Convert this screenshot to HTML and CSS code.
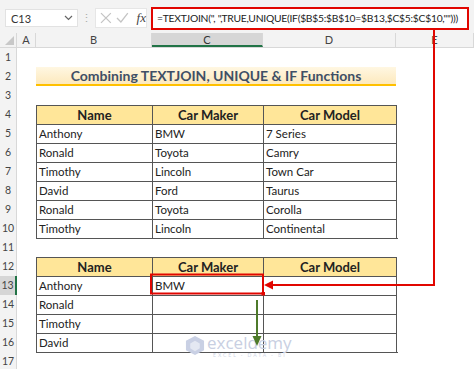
FILE: index.html
```html
<!DOCTYPE html>
<html lang="en">
<head>
    <meta charset="UTF-8">
    <title>TEXTJOIN UNIQUE IF</title>
    <link rel="stylesheet" href="styles.css">
</head>
<body>

<div class="app">
    <div class="formula-bar">
        <div class="name-box">
            <span>C13</span>
            <svg class="chevron" width="9" height="6" viewBox="0 0 9 6"><path d="M1 1 L4.5 4.5 L8 1" fill="none" stroke="#666" stroke-width="1.2"/></svg>
        </div>
        <div class="grip">⋮</div>
        <div class="fx-box">
            <svg width="12" height="12" viewBox="0 0 12 12"><path d="M1 1 L11 11 M11 1 L1 11" stroke="#c4c4c4" stroke-width="1.3"/></svg>
            <svg width="13" height="12" viewBox="0 0 13 12"><path d="M1 6 L5 10 L12 1" fill="none" stroke="#c4c4c4" stroke-width="1.3"/></svg>
            <span class="fx">fx</span>
        </div>
        <div class="formula">=TEXTJOIN(", ",TRUE,UNIQUE(IF($B$5:$B$10=$B13,$C$5:$C$10,"")))</div>
    </div>

    <div class="col-heads">
        <div class="corner"><svg width="9" height="9" viewBox="0 0 9 9"><path d="M9 0 L9 9 L0 9 Z" fill="#c8c8c8"/></svg></div>
        <div class="col-head col-a">A</div>
        <div class="col-head col-b">B</div>
        <div class="col-head col-c active">C</div>
        <div class="col-head col-d">D</div>
        <div class="col-head col-e">E</div>
    </div>

    <div class="sheet">
        <div class="row-heads">
            <div class="row-head">1</div>
            <div class="row-head">2</div>
            <div class="row-head">3</div>
            <div class="row-head">4</div>
            <div class="row-head">5</div>
            <div class="row-head">6</div>
            <div class="row-head">7</div>
            <div class="row-head">8</div>
            <div class="row-head">9</div>
            <div class="row-head">10</div>
            <div class="row-head">11</div>
            <div class="row-head">12</div>
            <div class="row-head active">13</div>
            <div class="row-head">14</div>
            <div class="row-head">15</div>
            <div class="row-head">16</div>
            <div class="row-head">17</div>
        </div>

        <div class="cells">
            <div class="blank"></div>
            <div class="title">Combining TEXTJOIN, UNIQUE &amp; IF Functions</div>
            <div class="blank"></div>

            <div class="data-table">
                <div class="th">Name</div><div class="th">Car Maker</div><div class="th">Car Model</div>
                <div class="td">Anthony</div><div class="td">BMW</div><div class="td">7 Series</div>
                <div class="td">Ronald</div><div class="td">Toyota</div><div class="td">Camry</div>
                <div class="td">Timothy</div><div class="td">Lincoln</div><div class="td">Town Car</div>
                <div class="td">David</div><div class="td">Ford</div><div class="td">Taurus</div>
                <div class="td">Ronald</div><div class="td">Toyota</div><div class="td">Corolla</div>
                <div class="td">Timothy</div><div class="td">Lincoln</div><div class="td">Continental</div>
            </div>

            <div class="blank short"></div>

            <div class="data-table">
                <div class="th">Name</div><div class="th">Car Maker</div><div class="th">Car Model</div>
                <div class="td">Anthony</div><div class="td">BMW</div><div class="td"></div>
                <div class="td">Ronald</div><div class="td"></div><div class="td"></div>
                <div class="td">Timothy</div><div class="td"></div><div class="td"></div>
                <div class="td">David</div><div class="td"></div><div class="td"></div>
            </div>
        </div>
    </div>

    <div class="watermark">
        <svg width="20" height="21" viewBox="0 0 21 22">
            <path d="M10.5 1 L20 6 L20 16 L10.5 21 L1 16 L1 6 Z" fill="#c9d0e4"/>
            <path d="M10.5 6 L15.5 9 L15.5 14 L10.5 17 L5.5 14 L5.5 9 Z" fill="#e4e8f2"/>
        </svg>
        <div class="wm-text">
            <span class="wm-name">exceldemy</span>
            <span class="wm-sub">EXCEL · DATA · BI</span>
        </div>
    </div>

    <svg class="overlay" width="474" height="369" viewBox="0 0 474 369">
        <rect x="151" y="274.5" width="112" height="19" fill="none" stroke="#e10600" stroke-width="2"/>
        <rect x="261.5" y="292" width="3.5" height="3.5" fill="#e10600"/>
        <path d="M434 28 L434 285 L270 285" fill="none" stroke="#e10600" stroke-width="2"/>
        <path d="M264 285 L273 280.5 L273 289.5 Z" fill="#e10600"/>
        <path d="M257 300 L257 338" fill="none" stroke="#4e7a2a" stroke-width="2"/>
        <path d="M257 346 L252.5 336 L261.5 336 Z" fill="#4e7a2a"/>
    </svg>
</div>

</body>
</html>
```

FILE: styles.css
```css
body {
    margin: 0;
    font-family: Lato, 'Open Sans', sans-serif;
    color: #222;
    background: #fff;
}

.app {
    position: relative;
    width: 474px;
    height: 369px;
    overflow: hidden;
    background: #fff;
}

/* Barra de formula */
.formula-bar {
    height: 33px;
    background: #f3f3f3;
    display: flex;
    align-items: center;
    padding-left: 5px;
    box-sizing: border-box;
    padding-top: 3px;
}

.name-box {
    width: 73px;
    height: 18px;
    background: #fff;
    border: 1px solid #e2e2e2;
    box-sizing: border-box;
    display: flex;
    align-items: center;
    justify-content: space-between;
    padding: 0 4px 0 5px;
    font-size: 11px;
    color: #333;
}

.grip {
    width: 17px;
    text-align: center;
    color: #aaa;
    font-size: 11px;
}

.fx-box {
    width: 52px;
    height: 20px;
    background: #fff;
    border: 1px solid #e6e6e6;
    box-sizing: border-box;
    display: flex;
    align-items: center;
    gap: 4px;
    padding-left: 4px;
}

.fx {
    font-family: 'Liberation Serif', serif;
    font-style: italic;
    font-size: 13px;
    color: #444;
    margin-left: 4px;
}

.formula {
    margin-left: 4px;
    width: 318px;
    height: 23px;
    background: #fff;
    border: 2px solid #e10600;
    box-sizing: border-box;
    font-size: 10.3px;
    letter-spacing: -0.25px;
    line-height: 19px;
    padding-left: 4px;
    white-space: nowrap;
    overflow: hidden;
    color: #222;
}

/* Encabezados de columna */
.col-heads {
    height: 14px;
    display: flex;
    background: #f3f3f3;
    border-bottom: 1px solid #d8d8d8;
    font-size: 11px;
    color: #444;
}

.corner {
    width: 17px;
    display: flex;
    align-items: flex-end;
    justify-content: flex-end;
    padding: 0 2px 2px 0;
    box-sizing: border-box;
    border-right: 1px solid #d8d8d8;
}

.col-head {
    text-align: center;
    line-height: 14px;
    border-right: 1px solid #d8d8d8;
    box-sizing: border-box;
}

.col-a { width: 19px; }
.col-b { width: 116px; }
.col-c { width: 111px; }
.col-d { width: 133px; }
.col-e { width: 78px; }

.col-head.active {
    background: #d6d6d6;
    border-bottom: 2px solid #217346;
    line-height: 13px;
    color: #333;
}

/* Hoja */
.sheet {
    display: flex;
}

.row-heads {
    width: 17px;
    background: #f3f3f3;
    border-right: 1px solid #d8d8d8;
    box-sizing: border-box;
}

.row-head {
    height: 19px;
    line-height: 19px;
    text-align: center;
    font-size: 10.5px;
    color: #444;
}

.row-head.active {
    background: #d6d6d6;
    border-right: 2px solid #217346;
    margin-right: -1px;
}

.cells {
    padding-left: 19px;
    display: flex;
    flex-direction: column;
}

.blank {
    height: 19px;
}

.blank.short {
    height: 18px;
}

.title {
    width: 360px;
    height: 19px;
    box-sizing: border-box;
    background: linear-gradient(to bottom, #fff7e2, #fde9bd);
    border-bottom: 2px solid #ffc000;
    text-align: center;
    font-weight: bold;
    font-size: 14px;
    line-height: 18px;
    color: #3f4f66;
}

.data-table {
    display: grid;
    grid-template-columns: 116px 111px 133px;
    border-left: 1px solid #555;
    border-bottom: 1px solid #555;
    width: 361px;
}

.th, .td {
    height: 19px;
    box-sizing: border-box;
    border-top: 1px solid #555;
    border-right: 1px solid #555;
    font-size: 11.5px;
    line-height: 18px;
    padding-left: 2px;
    white-space: nowrap;
}

.th {
    background: #ffe699;
    font-weight: bold;
    font-size: 13px;
    text-align: center;
    padding-left: 0;
}

/* Marca de agua */
.watermark {
    position: absolute;
    left: 185px;
    top: 335px;
    display: flex;
    align-items: flex-start;
    gap: 2px;
}

.wm-text {
    display: flex;
    flex-direction: column;
    line-height: 1;
}

.wm-name {
    font-family: 'Open Sans', sans-serif;
    font-size: 17px;
    line-height: 16px;
    color: #c8cfe2;
}

.wm-sub {
    font-size: 5px;
    line-height: 6px;
    margin-top: 1px;
    color: #d0d6e6;
    letter-spacing: 2px;
    margin-left: 6px;
}

.overlay {
    position: absolute;
    top: 0;
    left: 0;
    pointer-events: none;
}
```
